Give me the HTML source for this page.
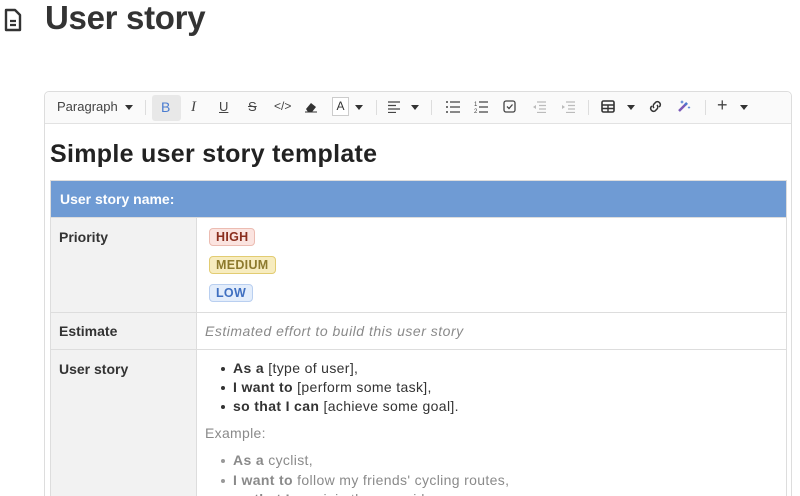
<!DOCTYPE html>
<html><head><meta charset="utf-8"><style>
*{box-sizing:border-box;margin:0;padding:0}
html,body{width:800px;height:496px;overflow:hidden}
body{background:#fff;font-family:"Liberation Sans",sans-serif;color:#333;position:relative}
.a{position:absolute}
h1{position:absolute;left:45px;top:-1px;font-size:33px;font-weight:bold;color:#333;letter-spacing:-0.3px}
.ed{left:44px;top:91px;width:748px;height:420px;border:1px solid #ddd;border-radius:5px}
.tb{left:45px;top:92px;width:746px;height:32px;background:#fafafa;border-bottom:1px solid #e2e2e2;border-radius:5px 5px 0 0}
.ti{position:absolute;top:99px;font-size:13px;color:#444}
.sep{position:absolute;top:100px;width:1px;height:15px;background:#ddd}
.caret{position:absolute;top:105px;width:0;height:0;border-left:4px solid transparent;border-right:4px solid transparent;border-top:5px solid #333}
h2{position:absolute;left:50px;top:140px;font-size:25px;font-weight:bold;color:#222;letter-spacing:0.3px}
.tbl{left:50px;top:180px;width:737px;height:330px;border:1px solid #ddd}
.hdr{left:51px;top:181px;width:735px;height:36px;background:#6f9bd4;color:#fff;font-weight:bold;font-size:14px;padding:10px 9px}
.c1{left:51px;width:146px;background:#f2f2f2;border-right:1px solid #ddd}
.lab{position:absolute;left:59px;font-size:14px;font-weight:bold;color:#333}
.hl{position:absolute;left:51px;width:735px;height:1px;background:#ddd}
.badge{position:absolute;left:209px;font-size:12.5px;font-weight:bold;padding:1px 6px;border-radius:4px;border:1px solid;letter-spacing:0.3px}
.li{position:absolute;left:233px;font-size:14px;color:#333;letter-spacing:0.35px}
.dot{position:absolute;left:221px;width:4px;height:4px;border-radius:50%;background:#333}
.g{color:#8a8a8a}.gd{background:#999}
</style></head><body>
<svg class="a" style="left:3px;top:8px" width="20" height="24" viewBox="0 0 20 24"><path d="M3 2h9l5 5v15H3z" fill="none" stroke="#333" stroke-width="2.4" stroke-linejoin="round"/><path d="M7 13h6M7 17h6" stroke="#333" stroke-width="2.2"/></svg>
<h1>User story</h1>
<div class="a ed"></div>
<div class="a tb"></div>
<div class="ti" style="left:57px">Paragraph</div><div class="caret" style="left:125px"></div>
<div class="sep" style="left:145px"></div>
<div class="a" style="left:152px;top:95px;width:29px;height:26px;background:#e8e8e8;border-radius:3px"></div>
<div class="ti" style="left:161px;color:#4a7cd0;font-size:14px">B</div>
<div class="ti" style="left:191px;font-style:italic;font-family:'Liberation Serif',serif;font-size:15px">I</div>
<div class="ti" style="left:219px;text-decoration:underline">U</div>
<div class="ti" style="left:248px;text-decoration:line-through">S</div>
<div class="ti" style="left:274px;font-size:12px">&lt;/&gt;</div>
<svg class="a" style="left:304px;top:101px" width="14" height="12"><path d="M2 8l5-6 5 4-4 5H4z" fill="#333"/><path d="M1 11h12" stroke="#333"/></svg>
<div class="a" style="left:332px;top:97px;width:17px;height:19px;border:1px solid #ccc;background:#fff;font-size:12px;text-align:center;line-height:17px">A</div>
<div class="caret" style="left:355px"></div>
<div class="sep" style="left:376px"></div>
<svg class="a" style="left:388px;top:101px" width="14" height="12"><path d="M0 1h12M0 4.5h8M0 8h12M0 11.5h8" stroke="#444" stroke-width="1.3"/></svg>
<div class="caret" style="left:411px"></div>
<div class="sep" style="left:431px"></div>
<svg class="a" style="left:446px;top:101px" width="14" height="12"><path d="M4 1h10M4 6h10M4 11h10" stroke="#444" stroke-width="1.3"/><path d="M0 1h2M0 6h2M0 11h2" stroke="#444" stroke-width="1.5"/></svg>
<svg class="a" style="left:474px;top:100px" width="14" height="13"><path d="M5 2h9M5 7h9M5 12h9" stroke="#444" stroke-width="1.3"/><text x="0" y="6" font-size="6" fill="#444">1</text><text x="0" y="13" font-size="6" fill="#444">2</text></svg>
<svg class="a" style="left:503px;top:100px" width="14" height="14"><rect x="1" y="1" width="11" height="11" rx="2" fill="none" stroke="#444" stroke-width="1.3"/><path d="M4 6.5l2 2 3.5-4" fill="none" stroke="#444" stroke-width="1.3"/></svg>
<svg class="a" style="left:532px;top:101px" width="14" height="12"><path d="M5 1h9M7 4.5h7M7 8h7M5 11.5h9" stroke="#bbb" stroke-width="1.2"/><path d="M4 4l-3 2 3 2z" fill="#bbb"/></svg>
<svg class="a" style="left:561px;top:101px" width="14" height="12"><path d="M5 1h9M7 4.5h7M7 8h7M5 11.5h9" stroke="#bbb" stroke-width="1.2"/><path d="M1 4l3 2-3 2z" fill="#bbb"/></svg>
<div class="sep" style="left:588px"></div>
<svg class="a" style="left:601px;top:100px" width="14" height="13"><rect x="1" y="1" width="12" height="11" rx="1.5" fill="none" stroke="#333" stroke-width="1.6"/><path d="M1 5h12M7 5v7M1 8.5h12" stroke="#333" stroke-width="1.4"/></svg>
<div class="caret" style="left:627px"></div>
<svg class="a" style="left:647px;top:99px" width="17" height="15"><path d="M7 9a3 3 0 0 1 0-4l2-2a3 3 0 0 1 4 4l-1 1M10 6a3 3 0 0 1 0 4l-2 2a3 3 0 0 1-4-4l1-1" fill="none" stroke="#333" stroke-width="1.5"/></svg>
<svg class="a" style="left:676px;top:98px" width="16" height="16"><path d="M3 13l8-8" stroke="#7a5ab8" stroke-width="2.5"/><path d="M9 7l2-2" stroke="#4a7cd0" stroke-width="2.5"/><path d="M6 2l.6 1.4L8 4l-1.4.6L6 6l-.6-1.4L4 4l1.4-.6zM13 8l.5 1 1 .5-1 .5-.5 1-.5-1-1-.5 1-.5z" fill="#4a7cd0"/></svg>
<div class="sep" style="left:705px"></div>
<div class="ti" style="left:717px;font-size:18px;top:95px">+</div>
<div class="caret" style="left:740px"></div>
<h2>Simple user story template</h2>
<div class="a tbl"></div>
<div class="a hdr">User story name:</div>
<div class="a c1" style="top:217px;height:293px"></div>
<div class="hl" style="top:217px"></div>
<div class="hl" style="top:312px"></div>
<div class="hl" style="top:349px"></div>
<div class="lab" style="top:229px">Priority</div>
<div class="lab" style="top:323px">Estimate</div>
<div class="lab" style="top:361px">User story</div>
<div class="badge" style="top:228px;background:#fbe4e0;border-color:#ecbcb2;color:#8b2e1e">HIGH</div>
<div class="badge" style="top:256px;background:#f7ecbf;border-color:#e2cc72;color:#8d7a2e">MEDIUM</div>
<div class="badge" style="top:284px;background:#e3edfb;border-color:#b9cff0;color:#3f6fc0">LOW</div>
<div class="a" style="left:205px;top:323px;font-size:14px;font-style:italic;color:#8a8a8a;letter-spacing:0.5px">Estimated effort to build this user story</div>
<div class="dot" style="top:367px"></div><div class="li" style="top:360px"><b>As a</b> [type of user],</div>
<div class="dot" style="top:386px"></div><div class="li" style="top:379px"><b>I want to</b> [perform some task],</div>
<div class="dot" style="top:405px"></div><div class="li" style="top:398px"><b>so that I can</b> [achieve some goal].</div>
<div class="a g" style="left:205px;top:425px;font-size:14px;letter-spacing:0.3px">Example:</div>
<div class="dot gd" style="top:459px"></div><div class="li g" style="top:452px"><b>As a</b> cyclist,</div>
<div class="dot gd" style="top:479px"></div><div class="li g" style="top:472px"><b>I want to</b> follow my friends' cycling routes,</div>
<div class="dot gd" style="top:498px"></div><div class="li g" style="top:491px"><b>so that I can</b> join them on rides.</div>
</body></html>
